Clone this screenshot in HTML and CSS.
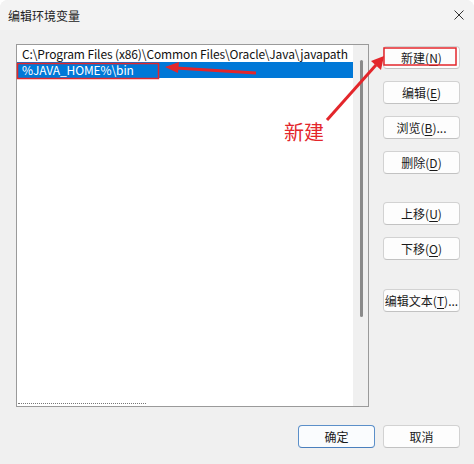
FILE: index.html
```html
<!DOCTYPE html>
<html lang="zh-CN">
<head>
  <meta charset="UTF-8">
  <title>编辑环境变量</title>
  <link rel="stylesheet" href="styles.css">
</head>
<body>

<div class="window">

  <!-- Title bar -->
  <div class="titlebar">
    <span class="title">编辑环境变量</span>
    <svg class="close" width="10" height="10" viewBox="0 0 10 10">
      <path d="M0.5 0.5 L9.5 9.5 M9.5 0.5 L0.5 9.5" stroke="#333" stroke-width="1" fill="none"/>
    </svg>
  </div>

  <div class="content">
    <!-- Path list -->
    <div class="list">
      <div class="rows">
        <div class="row">C:\Program Files (x86)\Common Files\Oracle\Java\javapath</div>
        <div class="row selected">%JAVA_HOME%\bin</div>
        <div class="focus-line"></div>
      </div>
      <div class="scrollbar">
        <div class="thumb"></div>
      </div>
    </div>

    <!-- Action buttons -->
    <div class="side-buttons">
      <button class="btn">新建(<u>N</u>)</button>
      <button class="btn">编辑(<u>E</u>)</button>
      <button class="btn">浏览(<u>B</u>)...</button>
      <button class="btn">删除(<u>D</u>)</button>
      <button class="btn gap">上移(<u>U</u>)</button>
      <button class="btn">下移(<u>O</u>)</button>
      <button class="btn gap-2">编辑文本(<u>T</u>)...</button>
    </div>
  </div>

  <div class="footer">
    <button class="btn default">确定</button>
    <button class="btn">取消</button>
  </div>

  <!-- Red annotations drawn over the dialog -->
  <svg class="annotations" width="474" height="464" viewBox="0 0 474 464">
    <rect x="17.5" y="63.5" width="141" height="15" fill="none" stroke="#e3262b" stroke-width="1.5"/>
    <line x1="256" y1="73" x2="176" y2="68" stroke="#e3262b" stroke-width="3"/>
    <polygon points="165,67 179,62 178,73" fill="#e3262b"/>
    <rect x="384" y="48" width="72" height="17" fill="none" stroke="#e3262b" stroke-width="1.5"/>
    <line x1="327" y1="120" x2="376" y2="65" stroke="#e3262b" stroke-width="3"/>
    <polygon points="384,56 381,70 371,61" fill="#e3262b"/>
  </svg>
  <span class="note">新建</span>

</div>

</body>
</html>
```

FILE: styles.css
```css
body {
  margin: 0;
  background: #fff;
  font-family: "Noto Sans CJK SC", "Noto Sans", sans-serif;
  font-size: 12px;
  color: #1a1a1a;
}

.window {
  position: relative;
  width: 474px;
  height: 464px;
  background: #f0f0f0;
  border-radius: 8px 8px 0 0;
  overflow: hidden;
}

/* Title bar */
.titlebar {
  height: 30px;
  background: #f3f3f3;
  display: flex;
  align-items: center;
  justify-content: space-between;
  padding: 0 10px 0 8px;
}

.title {
  font-size: 12px;
  color: #222;
}

/* Main area */
.content {
  display: flex;
  gap: 14px;
  padding: 14px 14px 0 16px;
}

.list {
  width: 351px;
  height: 361px;
  border: 1px solid #9a9a9a;
  background: #fff;
  display: flex;
}

.rows {
  flex: 1;
  padding-top: 1px;
  position: relative;
}

.row {
  height: 16px;
  line-height: 16px;
  padding-left: 5px;
  white-space: nowrap;
  letter-spacing: -0.12px;
  color: #111;
}

.row.selected {
  background: #0078d7;
  color: #fff;
}

.focus-line {
  position: absolute;
  left: 1px;
  bottom: 2px;
  width: 128px;
  border-bottom: 1px dotted #777;
}

.scrollbar {
  width: 15px;
  background: #f0f0f0;
  display: flex;
  justify-content: center;
  padding-top: 15px;
}

.thumb {
  width: 3px;
  height: 257px;
  margin-left: 2px;
  background: #8a8a8a;
  border-radius: 2px;
}

/* Buttons */
.side-buttons {
  display: flex;
  flex-direction: column;
  gap: 12px;
  padding-top: 2px;
}

.btn {
  width: 77px;
  height: 23px;
  padding: 0;
  font-family: inherit;
  font-size: 12px;
  color: #1a1a1a;
  background: #fdfdfd;
  border: 1px solid #d2d2d2;
  border-bottom-color: #c2c2c2;
  border-radius: 4px;
}

.btn u {
  text-underline-offset: 2px;
}

.btn.gap {
  margin-top: 16px;
}

.btn.gap-2 {
  margin-top: 17px;
}

.footer {
  display: flex;
  justify-content: flex-end;
  gap: 8px;
  padding: 18px 14px 0 0;
}

.btn.default {
  background: #fafcfe;
  border: 1px solid #5b8fc9;
  border-bottom-color: #4a7fbd;
}

/* Annotations */
.annotations {
  position: absolute;
  left: 0;
  top: 0;
  pointer-events: none;
}

.note {
  position: absolute;
  left: 284px;
  top: 117px;
  font-size: 20px;
  color: #e3262b;
}
```
